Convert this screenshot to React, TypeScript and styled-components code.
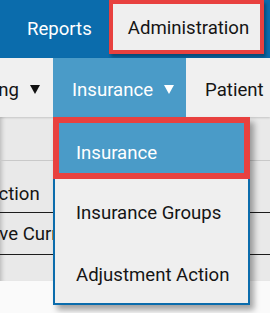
import React from 'react'
import { createGlobalStyle, styled } from 'styled-components'

const GlobalStyles = createGlobalStyle`
  html, body {
    margin: 0;
    padding: 0;
    background: #fafafa;
  }

  body {
    font-family: Roboto, "Liberation Sans", Arial, sans-serif;
    font-size: 18.6px;
    color: #151515;
  }
`

const Page = styled.div`
  position: relative;
  width: 270px;
  height: 313px;
  overflow: hidden;
  background: #fafafa;
`

/* top navigation */

const TopBar = styled.div`
  display: flex;
  align-items: flex-start;
  height: 58px;
  padding-left: 27px;
  background: #0b6cac;
`

const TopItem = styled.div`
  display: flex;
  align-items: center;
  height: 58px;
  margin-right: 17px;
  color: #fff;
`

const HighlightTab = styled.div`
  display: flex;
  align-items: center;
  box-sizing: border-box;
  height: 54px;
  padding: 1px 11px 0 15px;
  border: 4px solid #e8413f;
  background: #efefef;
  color: #151515;
  box-shadow: 2px 3px 3px rgba(0, 0, 0, 0.3);
`

/* sub navigation */

const SubBar = styled.div`
  display: flex;
  height: 59px;
  background: #f0f0f0;
  box-shadow: 0 1px 2px rgba(0, 0, 0, 0.15);
  position: relative;
  z-index: 1;
`

const SubItem = styled.div<{ $active?: boolean; $clipped?: boolean }>`
  display: flex;
  align-items: center;
  flex-shrink: 0;
  gap: 11px;
  padding: 5px 12px 0 19px;
  white-space: nowrap;
  background: ${(p) => (p.$active ? '#4a9bc8' : 'transparent')};
  color: ${(p) => (p.$active ? '#fff' : '#151515')};
  ${(p) =>
    p.$clipped &&
    `
    width: 53px;
    box-sizing: border-box;
    padding-left: 0;
    padding-right: 13px;
    justify-content: flex-end;
    overflow: hidden;
  `}
`

const Caret = styled.span<{ $light?: boolean }>`
  display: inline-block;
  width: 0;
  height: 0;
  margin-top: -1px;
  border-left: 5px solid transparent;
  border-right: 5px solid transparent;
  border-top: 9px solid ${(p) => (p.$light ? '#fff' : '#111')};
`

/* table behind the menu */

const Content = styled.div`
  background: #e9e9e9;
  box-shadow: inset 5px 0 5px -4px rgba(0, 0, 0, 0.25);
`

const Row = styled.div<{ $height: number; $line: string; $shift?: number }>`
  display: flex;
  align-items: center;
  box-sizing: border-box;
  height: ${(p) => p.$height}px;
  padding-top: ${(p) => p.$shift ?? 0}px;
  border-bottom: 1px solid ${(p) => p.$line};
  overflow: hidden;
  white-space: nowrap;
`

const Cell = styled.div<{ $offset: number }>`
  margin-left: ${(p) => p.$offset}px;
`

const Spacer = styled.div`
  height: 26px;
`

/* dropdown menu */

const Dropdown = styled.div`
  position: absolute;
  left: 53px;
  top: 117px;
  width: 197px;
  z-index: 2;
  box-shadow: 4px 5px 6px rgba(0, 0, 0, 0.35);
`

const ActiveOption = styled.div`
  display: flex;
  align-items: center;
  box-sizing: border-box;
  height: 62px;
  padding: 9px 0 0 17px;
  border: 6px solid #e8413f;
  background: #4a9bc8;
  color: #fff;
`

const OptionList = styled.div`
  border: 2px solid #0b6cac;
  border-top: none;
  background: #efefef;
`

const Option = styled.div`
  display: flex;
  align-items: center;
  height: 62px;
  padding: 5px 0 0 21px;
  box-sizing: border-box;
`

const App = () => (
  <>
    <GlobalStyles />
    <Page>
      <TopBar>
        <TopItem>Reports</TopItem>
        <HighlightTab>Administration</HighlightTab>
      </TopBar>
      <SubBar>
        <SubItem $clipped>
          Billing <Caret />
        </SubItem>
        <SubItem $active>
          Insurance <Caret $light />
        </SubItem>
        <SubItem>Patient</SubItem>
      </SubBar>
      <Content>
        <Row $height={44} $line="#c9c9c9" />
        <Row $height={52} $line="#1c1c1c" $shift={14}>
          <Cell $offset={-58}>Transaction</Cell>
        </Row>
        <Row $height={42} $line="#1c1c1c">
          <Cell $offset={-54}>Effective Currency</Cell>
        </Row>
        <Spacer />
      </Content>
      <Dropdown>
        <ActiveOption>Insurance</ActiveOption>
        <OptionList>
          <Option>Insurance Groups</Option>
          <Option>Adjustment Action</Option>
        </OptionList>
      </Dropdown>
    </Page>
  </>
)

export default App
